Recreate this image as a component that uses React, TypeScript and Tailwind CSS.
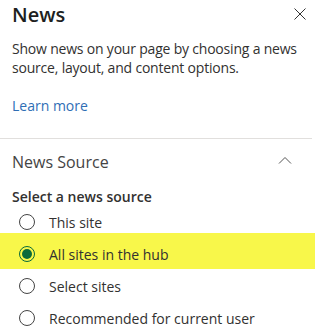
import React, { useState } from 'react';

const CloseIcon = () => (
    <svg className="h-3 w-3" viewBox="0 0 12 12" fill="none" stroke="#333" strokeWidth="1">
        <path d="M0.5 0.5l11 11M11.5 0.5l-11 11" />
    </svg>
);

const ChevronUpIcon = () => (
    <svg className="mb-[5px] h-[8px] w-[14px]" viewBox="0 0 14 8" fill="none" stroke="#555" strokeWidth="1">
        <path d="M1 7.5l6-6 6 6" />
    </svg>
);

const sources = ['This site', 'All sites in the hub', 'Select sites', 'Recommended for current user'];

const Radio: React.FC<{ checked: boolean }> = ({ checked }) => (
    <span
        className={`flex h-4 w-4 shrink-0 items-center justify-center rounded-full border ${
            checked ? 'border-[#0b6a3b]' : 'border-[#444]'
        }`}
    >
        {checked && <span className="h-[10px] w-[10px] rounded-full bg-[#0b6a3b]" />}
    </span>
);

export default function App() {
    const [selected, setSelected] = useState(1);

    return (
        <div className="h-[333px] w-[315px] overflow-hidden bg-white text-[#323130]" style={{ fontFamily: '"Open Sans", "Noto Sans", sans-serif' }}>
            {/* Header */}
            <div className="flex items-start justify-between pl-3 pr-2 pt-[1px]">
                <h1 className="text-[20px] font-semibold leading-[28px] text-[#201f1e]">News</h1>
                <button className="mt-[7px] mr-[1px] p-0" aria-label="Close">
                    <CloseIcon />
                </button>
            </div>

            <p className="mt-[10px] px-3 text-[14px] leading-[19px] tracking-[-0.2px]">
                Show news on your page by choosing a news source, layout, and content options.
            </p>

            <a className="mt-[19px] block px-3 text-[14px] leading-[19px] text-[#2f6eb5]">Learn more</a>

            <div className="mt-[23px] mr-[3px] border-t border-[#e1dfdd]" />

            {/* News Source section */}
            <div className="flex items-center justify-between pl-3 pr-[23px] pt-[12px]">
                <span className="text-[16px] leading-[22px] text-[#444]">News Source</span>
                <ChevronUpIcon />
            </div>

            <div className="mt-[14px] px-3 text-[14px] font-semibold leading-[19px]">Select a news source</div>

            <div className="flex flex-col">
                {sources.map((label, i) => (
                    <label
                        key={label}
                        onClick={() => setSelected(i)}
                        className={`flex cursor-pointer items-center gap-[14px] pl-[19px] text-[14px] ${
                            i === 1 ? 'mt-[-5px] mb-[1px] h-[36px] bg-[#f8f74a] pt-[6px]' : 'h-[32px]'
                        }`}
                    >
                        <Radio checked={selected === i} />
                        <span>{label}</span>
                    </label>
                ))}
            </div>
        </div>
    );
}
